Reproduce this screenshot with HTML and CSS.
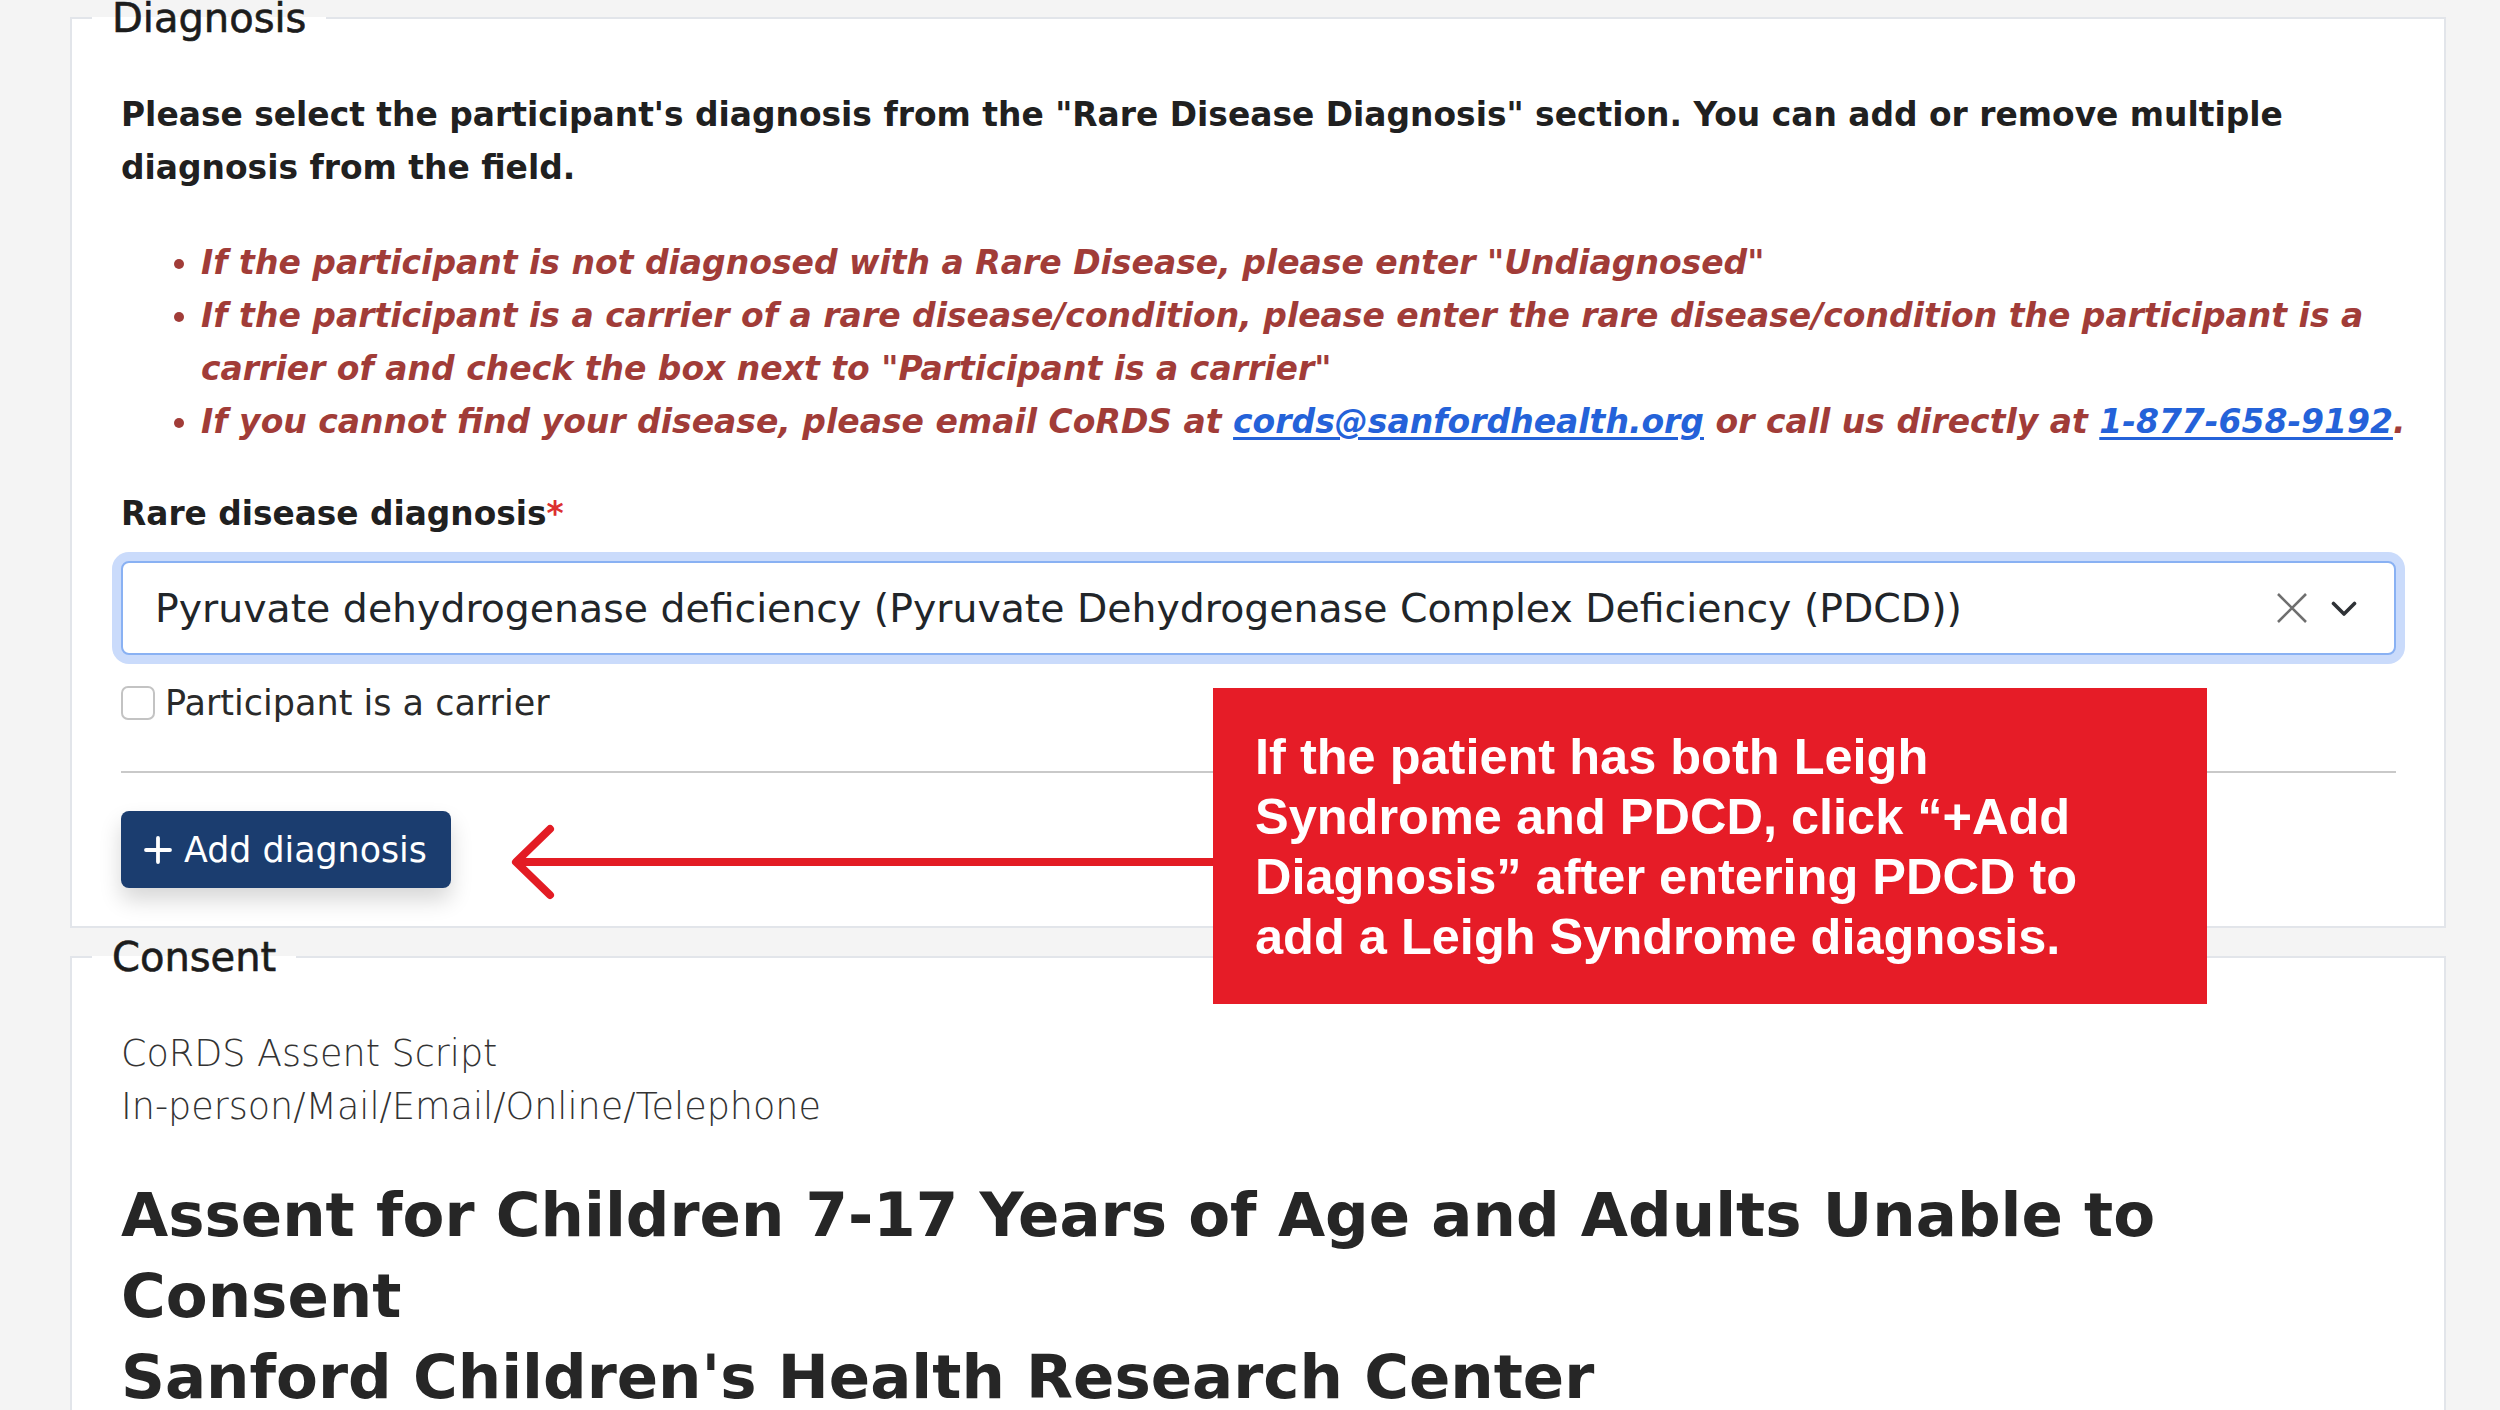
FILE: index.html
```html
<!DOCTYPE html>
<html lang="en">
<head>
<meta charset="utf-8">
<title>Diagnosis</title>
<link rel="stylesheet" href="styles.css">
</head>
<body>
<main class="page">
  <fieldset class="card">
    <legend class="card-title">Diagnosis</legend>
    <p class="intro">Please select the participant's diagnosis from the "Rare Disease Diagnosis" section. You can add or remove multiple diagnosis from the field.</p>
    <ul class="notes">
      <li>If the participant is not diagnosed with a Rare Disease, please enter "Undiagnosed"</li>
      <li>If the participant is a carrier of a rare disease/condition, please enter the rare disease/condition the participant is a carrier of and check the box next to "Participant is a carrier"</li>
      <li>If you cannot find your disease, please email CoRDS at <a href="#">cords@sanfordhealth.org</a> or call us directly at <a href="#" class="nowrap">1-877-658-9192</a>.</li>
    </ul>
    <label class="field-label">Rare disease diagnosis<span class="req">*</span></label>
    <div class="select">
      <span class="select-value">Pyruvate dehydrogenase deficiency (Pyruvate Dehydrogenase Complex Deficiency (PDCD))</span>
      <span class="select-tools">
        <svg class="ico-clear" viewBox="0 0 30 30" width="30" height="30"><path d="M1 1 L29 29 M29 1 L1 29" stroke="#6f6f6f" stroke-width="2.6" fill="none"/></svg>
        <svg class="ico-caret" viewBox="0 0 26 16" width="26" height="16"><path d="M2.5 2.5 L13 13 L23.5 2.5" stroke="#2f3236" stroke-width="3.6" fill="none" stroke-linecap="round" stroke-linejoin="round"/></svg>
      </span>
    </div>
    <label class="check"><input type="checkbox" class="check-box"><span>Participant is a carrier</span></label>
    <hr class="divider">
    <button class="btn-add" type="button"><svg class="ico-plus" viewBox="0 0 28 28" width="28" height="28"><path d="M14 2 V26 M2 14 H26" stroke="#fff" stroke-width="3.8" stroke-linecap="round" fill="none"/></svg><span>Add diagnosis</span></button>
  </fieldset>

  <fieldset class="card card-consent">
    <legend class="card-title">Consent</legend>
    <p class="script">CoRDS Assent Script<br>In-person/Mail/Email/Online/Telephone</p>
    <h1 class="assent">Assent for Children 7-17 Years of Age and Adults Unable to Consent<br>Sanford Children's Health Research Center</h1>
  </fieldset>
</main>

<svg class="arrow" viewBox="0 0 720 95" width="720" height="95">
  <path d="M20 47 H720" stroke="#e31c24" stroke-width="8" fill="none"/>
  <path d="M50 14 L16 47 L50 80" stroke="#e31c24" stroke-width="8" fill="none" stroke-linecap="round" stroke-linejoin="round"/>
</svg>
<div class="callout">If the patient has both Leigh Syndrome and PDCD, click “+Add Diagnosis” after entering PDCD to add a Leigh Syndrome diagnosis.</div>
</body>
</html>
```
FILE: styles.css
```css
html, body {
  margin: 0;
  padding: 0;
}
body {
  position: relative;
  background: #f4f4f4;
  font-family: "DejaVu Sans", "Noto Sans", sans-serif;
  color: #212121;
  min-height: 1410px;
  overflow: hidden;
}
.page {
  padding: 0 54px 80px 70px;
}
.card {
  box-sizing: border-box;
  width: 2376px;
  margin: 0;
  padding: 52px 48px 38px 49px;
  border: 2px solid #e2e5ea;
  background: #fff;
  min-inline-size: 0;
}
.card-consent {
  margin-top: 11px;
  padding-bottom: 120px;
}
.card-title {
  margin-left: -29px;
  padding: 0 20px;
  font-size: 40px;
  line-height: 36px;
  font-weight: 400;
  color: #1c1c1c;
  -webkit-text-stroke: 0.6px #1c1c1c;
}
.intro {
  margin: 0;
  font-size: 32.9px;
  line-height: 53px;
  font-weight: 700;
  color: #202020;
}
.notes {
  margin: 42px -40px 0 0;
  padding-left: 80px;
  font-size: 33px;
  line-height: 53px;
  font-weight: 700;
  font-style: italic;
  color: #a13c38;
}
.notes a {
  color: #2462d9;
  text-decoration: underline;
  text-underline-offset: 4px;
}
.nowrap {
  white-space: nowrap;
}
.field-label {
  display: block;
  margin-top: 46px;
  font-size: 32.8px;
  line-height: 40px;
  font-weight: 700;
  color: #202020;
}
.req {
  color: #dc3030;
}
.select {
  box-sizing: border-box;
  display: flex;
  align-items: center;
  justify-content: space-between;
  height: 94px;
  margin-top: 27px;
  padding: 0 37px 0 32px;
  border: 2px solid #89b1f3;
  border-radius: 8px;
  box-shadow: 0 0 0 9px #cadbfb;
  background: #fff;
}
.select-value {
  font-size: 39.4px;
  line-height: 46px;
  color: #212529;
  white-space: nowrap;
}
.select-tools {
  display: flex;
  align-items: center;
  gap: 24px;
}
.ico-caret {
  margin-top: 2px;
}
.check {
  display: flex;
  align-items: center;
  gap: 10px;
  margin-top: 28px;
  height: 40px;
  font-size: 35px;
  line-height: 40px;
  color: #2a2a2a;
}
.check-box {
  appearance: none;
  -webkit-appearance: none;
  box-sizing: border-box;
  width: 34px;
  height: 34px;
  margin: 0;
  border: 2px solid #c3c3c3;
  border-radius: 7px;
  background: #fff;
}
.divider {
  margin: 48px 0 0;
  height: 0;
  border: 0;
  border-top: 2px solid #c9c9c9;
}
.btn-add {
  box-sizing: border-box;
  display: inline-flex;
  align-items: center;
  gap: 12px;
  height: 77px;
  width: 330px;
  margin-top: 38px;
  padding: 0 0 0 23px;
  border: 0;
  border-radius: 8px;
  background: #1b3d6f;
  color: #fff;
  font-family: "DejaVu Sans", sans-serif;
  font-size: 34.8px;
  line-height: 40px;
  box-shadow: 0 12px 22px rgba(0, 0, 0, 0.16);
}
.ico-plus {
  flex: none;
}
.script {
  margin: 0;
  font-size: 36.5px;
  line-height: 53px;
  font-weight: 300;
  color: #333;
}
.assent {
  margin: 41px 0 0;
  font-size: 61px;
  line-height: 81px;
  font-weight: 700;
  color: #262626;
}
.arrow {
  position: absolute;
  left: 500px;
  top: 815px;
}
.callout {
  position: absolute;
  left: 1213px;
  top: 688px;
  box-sizing: border-box;
  width: 994px;
  height: 316px;
  padding: 39px 92px 38px 42px;
  background: #e61c27;
  color: #fff;
  font-family: "Liberation Sans", Arial, sans-serif;
  font-weight: 700;
  font-size: 50.5px;
  line-height: 60px;
}
```
